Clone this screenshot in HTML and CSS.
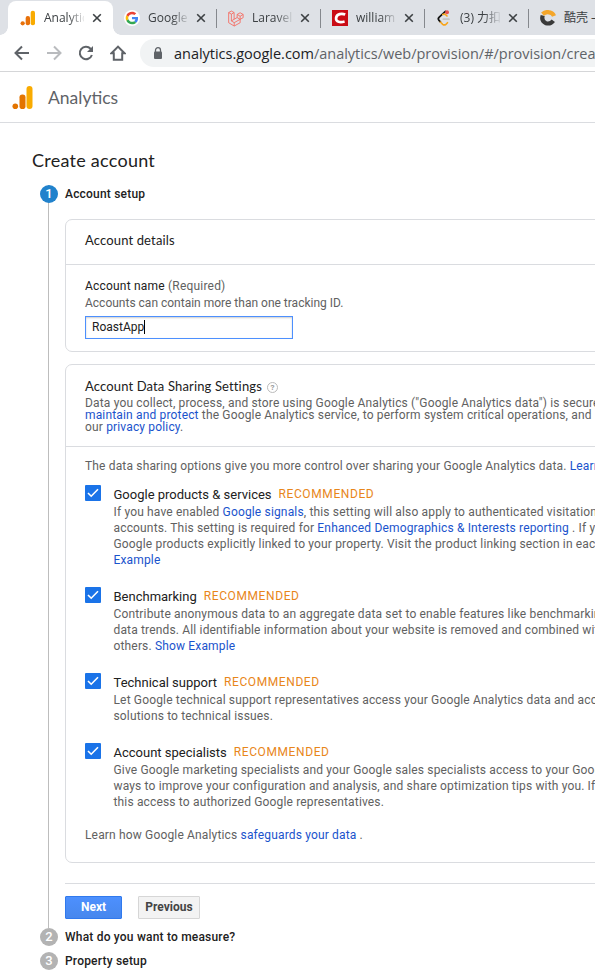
FILE: index.html
```
<!DOCTYPE html>
<html lang="en">
<head>
    <meta charset="UTF-8">
    <meta name="viewport" content="width=device-width, initial-scale=1.0">
    <title>Analytics</title>
    <link rel="stylesheet" href="styles.css">
</head>
<body>

<div class="tabs">
    <div class="tab active">
        <svg class="favicon" width="16" height="16" viewBox="0 0 24 24"><rect x="16" y="1" width="6.5" height="22" rx="3" fill="#f9ab00"/><rect x="8.5" y="9" width="6.5" height="14" rx="3" fill="#e8710a"/><circle cx="4" cy="20" r="3.2" fill="#e8710a"/></svg>
        <span class="tab-title">Analytics</span>
        <svg class="close" width="10" height="10" viewBox="0 0 10 10"><path d="M1.2 1.2l7.6 7.6M8.8 1.2L1.2 8.8"/></svg>
    </div>
    <div class="tab">
        <svg class="favicon round" width="16" height="16" viewBox="0 0 48 48"><circle cx="24" cy="24" r="24" fill="#fff"/><g transform="translate(5 5) scale(.79)"><path fill="#ea4335" d="M24 9.5c3.54 0 6.71 1.22 9.21 3.6l6.85-6.85C35.9 2.38 30.47 0 24 0 14.62 0 6.51 5.38 2.56 13.22l7.98 6.19C12.43 13.72 17.74 9.5 24 9.5z"/><path fill="#4285f4" d="M46.98 24.55c0-1.57-.15-3.09-.38-4.55H24v9.02h12.94c-.58 2.96-2.26 5.48-4.78 7.18l7.73 6c4.51-4.18 7.09-10.36 7.09-17.65z"/><path fill="#fbbc05" d="M10.53 28.59c-.48-1.45-.76-2.99-.76-4.59s.27-3.14.76-4.59l-7.98-6.19C.92 16.46 0 20.12 0 24s.92 7.54 2.56 10.78l7.97-6.19z"/><path fill="#34a853" d="M24 48c6.48 0 11.93-2.13 15.89-5.81l-7.73-6c-2.15 1.45-4.92 2.3-8.16 2.3-6.26 0-11.57-4.22-13.47-9.91l-7.98 6.19C6.51 42.62 14.62 48 24 48z"/></g></svg>
        <span class="tab-title">Google</span>
        <svg class="close" width="10" height="10" viewBox="0 0 10 10"><path d="M1.2 1.2l7.6 7.6M8.8 1.2L1.2 8.8"/></svg>
    </div>
    <div class="tab divided">
        <svg class="favicon" width="17" height="17" viewBox="0 0 17 17" fill="none" stroke="#f5675c" stroke-width=".9" stroke-linejoin="round"><path d="M.7 2.2L3.6.6l2.9 1.6v7.1l3.2-1.8V4.2l3.2-1.8 3.2 1.8v3.4l-3.2 1.8V13l-6.3 3.5L.7 13zM.7 2.2l2.9 1.7 2.9-1.7M3.6 3.9v7.2l3 1.8v3.6M3.6 11.1l2.9-1.8M9.7 4.2l3.2 1.9 3.2-1.9M12.9 6.1v3.3L9.7 7.5M6.6 12.9l6.3-3.5"/></svg>
        <span class="tab-title">Laravel</span>
        <svg class="close" width="10" height="10" viewBox="0 0 10 10"><path d="M1.2 1.2l7.6 7.6M8.8 1.2L1.2 8.8"/></svg>
    </div>
    <div class="tab divided">
        <svg class="favicon" width="16" height="16" viewBox="0 0 16 16"><rect width="16" height="16" fill="#ca0c16"/><path d="M13.2 4.5C10 3.2 4.6 3.6 4.1 8c-.5 4.3 4.3 4.6 8.5 3.5" fill="none" stroke="#fff" stroke-width="2.7"/></svg>
        <span class="tab-title">william</span>
        <svg class="close" width="10" height="10" viewBox="0 0 10 10"><path d="M1.2 1.2l7.6 7.6M8.8 1.2L1.2 8.8"/></svg>
    </div>
    <div class="tab divided">
        <svg class="favicon" width="16" height="16" viewBox="0 0 16 16" fill="none" stroke-linecap="round"><path d="M9.4 1.4L3 7.3q-1.4 1.5 0 3l1.4 1.5" stroke="#111" stroke-width="1.7"/><path d="M4.4 12l2.3 2.3q1.6 1.3 3.2 0l1.6-1.6M6.8 4.5q1.8-1 3.2.5l1 1" stroke="#f8a51b" stroke-width="1.6"/><path d="M7.4 9.2h5.5" stroke="#c4c4c4" stroke-width="1.8"/><circle cx="11" cy="2.2" r="2" fill="#e5504d"/></svg>
        <span class="tab-title">(3) 力扣</span>
        <svg class="close" width="10" height="10" viewBox="0 0 10 10"><path d="M1.2 1.2l7.6 7.6M8.8 1.2L1.2 8.8"/></svg>
    </div>
    <div class="tab divided">
        <svg class="favicon" width="16" height="16" viewBox="0 0 16 16" fill="none" stroke-width="4.2"><path d="M2.7 5.5Q1 11.2 6 13.2q4.5 1.2 7.3-2.5" stroke="#3a3a3a"/><path d="M2.5 4.2Q6 1.2 9.5 2.4 13 3.2 14 6" stroke="#f4a62a"/></svg>
        <span class="tab-title wide">酷壳 – C</span>
    </div>
</div>

<div class="toolbar">
    <svg class="nav" width="16" height="16" viewBox="0 0 16 16"><path d="M15 8H2M8 1.5L1.5 8 8 14.5"/></svg>
    <svg class="nav disabled" width="16" height="16" viewBox="0 0 16 16"><path d="M1 8h13M8 1.5L14.5 8 8 14.5"/></svg>
    <svg class="nav" width="16" height="16" viewBox="0 0 16 16"><path d="M13.9 10A6.2 6.2 0 1 1 12.6 3.8L14 5.2"/><path class="solid" d="M15 1v6H9z"/></svg>
    <svg class="nav" width="16" height="16" viewBox="0 0 16 16"><path d="M8 1.6L1.5 8.2h2.3v6.6h8.4V8.2h2.3z"/></svg>
    <div class="address">
        <svg width="10" height="13" viewBox="0 0 10 13"><rect x="1" y="4.5" width="8" height="7.5" rx="1" fill="#5f6368"/><path d="M2.5 5V3.2a2.5 2.5 0 0 1 5 0V5" fill="none" stroke="#5f6368" stroke-width="1.3"/></svg>
        <span class="url"><b>analytics.google.com</b>/analytics/web/provision/#/provision/create</span>
    </div>
</div>

<header class="header">
    <svg width="21" height="24" viewBox="0 0 21 24"><rect x="14.5" y="0" width="6" height="23" rx="3" fill="#f9ab00"/><rect x="7.5" y="8.5" width="6" height="14.5" rx="2.8" fill="#e37400"/><circle cx="3.3" cy="20.2" r="2.8" fill="#e37400"/></svg>
    <span class="product">Analytics</span>
</header>

<main class="page">
    <h1>Create account</h1>

    <section class="step open">
        <div class="rail"><span class="number current">1</span></div>
        <div class="step-body">
            <h2>Account setup</h2>

            <div class="card">
                <div class="card-head"><h3>Account details</h3></div>
                <div class="account">
                    <label for="name">Account name <span>(Required)</span></label>
                    <p class="hint">Accounts can contain more than one tracking ID.</p>
                    <div class="field" id="name">RoastApp<i class="caret"></i></div>
                </div>
            </div>

            <div class="card sharing">
                <div class="sharing-head">
                    <h3>Account Data Sharing Settings <span class="help">?</span></h3>
                    <p>Data you collect, process, and store using Google Analytics ("Google Analytics data") is secure<br><a>maintain and protect</a> the Google Analytics service, to perform system critical operations, and<br>our <a>privacy policy</a>.</p>
                </div>
                <div class="sharing-body">
                    <p class="intro">The data sharing options give you more control over sharing your Google Analytics data. <a>Learn more</a></p>

                    <div class="option">
                        <svg class="check" width="16" height="16" viewBox="0 0 16 16"><rect width="16" height="16" rx="1"/><path d="M3 8l3.2 3.2L13 4.2"/></svg>
                        <div>
                            <h4>Google products &amp; services <em>RECOMMENDED</em></h4>
                            <p>If you have enabled <a>Google signals</a>, this setting will also apply to authenticated visitation<br>accounts. This setting is required for <a>Enhanced Demographics &amp; Interests reporting</a> . If you<br>Google products explicitly linked to your property. Visit the product linking section in each<br><a>Example</a></p>
                        </div>
                    </div>
                    <div class="option">
                        <svg class="check" width="16" height="16" viewBox="0 0 16 16"><rect width="16" height="16" rx="1"/><path d="M3 8l3.2 3.2L13 4.2"/></svg>
                        <div>
                            <h4>Benchmarking <em>RECOMMENDED</em></h4>
                            <p>Contribute anonymous data to an aggregate data set to enable features like benchmarking<br>data trends. All identifiable information about your website is removed and combined with<br>others. <a>Show Example</a></p>
                        </div>
                    </div>
                    <div class="option">
                        <svg class="check" width="16" height="16" viewBox="0 0 16 16"><rect width="16" height="16" rx="1"/><path d="M3 8l3.2 3.2L13 4.2"/></svg>
                        <div>
                            <h4>Technical support <em>RECOMMENDED</em></h4>
                            <p>Let Google technical support representatives access your Google Analytics data and account<br>solutions to technical issues.</p>
                        </div>
                    </div>
                    <div class="option">
                        <svg class="check" width="16" height="16" viewBox="0 0 16 16"><rect width="16" height="16" rx="1"/><path d="M3 8l3.2 3.2L13 4.2"/></svg>
                        <div>
                            <h4>Account specialists <em>RECOMMENDED</em></h4>
                            <p>Give Google marketing specialists and your Google sales specialists access to your Google<br>ways to improve your configuration and analysis, and share optimization tips with you. If<br>this access to authorized Google representatives.</p>
                        </div>
                    </div>

                    <p class="learn">Learn how Google Analytics <a>safeguards your data</a> .</p>
                </div>
            </div>

            <div class="actions">
                <button class="primary">Next</button>
                <button>Previous</button>
            </div>
        </div>
    </section>

    <section class="step">
        <div class="rail"><span class="number">2</span></div>
        <h2>What do you want to measure?</h2>
    </section>
    <section class="step">
        <div class="rail"><span class="number">3</span></div>
        <h2>Property setup</h2>
    </section>
</main>

</body>
</html>
```
FILE: styles.css
```
* {
    box-sizing: border-box;
}
body {
    margin: 0;
    height: 970px;
    overflow: hidden;
    background: #fff;
    color: #212121;
    font-family: Roboto, "Noto Sans CJK SC", sans-serif;
    font-size: 12px;
    letter-spacing: 0.16px;
    white-space: nowrap;
}
h1, h2, h3, h4, p {
    margin: 0;
    font-weight: 400;
}
a {
    color: #1a53cc;
}

/* browser tabs */
.tabs {
    display: flex;
    height: 35px;
    padding-left: 8px;
    background: #dee1e6;
    font-family: "Open Sans", "Noto Sans CJK SC", sans-serif;
    letter-spacing: 0;
    overflow: hidden;
}
.tab {
    position: relative;
    flex: none;
    display: flex;
    align-items: center;
    width: 104px;
    height: 35px;
    padding: 1px 0 0 12px;
    color: #3c4043;
}
.tab.active {
    height: 34px;
    margin: 1px -1px 0 0;
    padding: 0 0 0 12px;
    width: 105px;
    border-radius: 8px 8px 0 0;
    background: #fff;
}
.tab.active::before, .tab.active::after {
    content: "";
    position: absolute;
    bottom: 0;
    left: -8px;
    width: 8px;
    height: 8px;
    background: radial-gradient(circle at 0 0, #dee1e6 7.5px, #fff 8px);
}
.tab.active::after {
    left: auto;
    right: -8px;
    background: radial-gradient(circle at 100% 0, #dee1e6 7.5px, #fff 8px);
}
.tab.divided::before {
    content: "";
    position: absolute;
    left: 0;
    top: 9px;
    width: 1px;
    height: 19px;
    background: #85888d;
}
.favicon {
    flex: none;
    width: 16px;
    margin-right: 8px;
}
.tab-title {
    width: 40px;
    margin-right: 8px;
    overflow: hidden;
    font-size: 12px;
    line-height: 18px;
    -webkit-mask-image: linear-gradient(to right, #000 60%, transparent 105%);
    mask-image: linear-gradient(to right, #000 60%, transparent 105%);
}
.tab-title.wide {
    width: 70px;
    -webkit-mask-image: none;
    mask-image: none;
}
.close {
    fill: none;
    stroke: #3c4043;
    stroke-width: 1.6;
}

/* address bar */
.toolbar {
    display: flex;
    align-items: center;
    gap: 16px;
    height: 37px;
    padding-left: 14px;
    border-bottom: 1px solid #d5d6d8;
}
.nav {
    flex: none;
    fill: none;
    stroke: #5f6368;
    stroke-width: 2;
}
.nav .solid {
    fill: #5f6368;
    stroke: none;
}
.nav.disabled {
    stroke: #b9bbbe;
}
.address {
    flex: none;
    display: flex;
    align-items: center;
    gap: 11px;
    width: 500px;
    height: 28px;
    margin-left: -2px;
    padding-left: 13px;
    border-radius: 14px;
    background: #f1f3f4;
}
.url {
    font-family: "Open Sans", sans-serif;
    font-size: 14.5px;
    letter-spacing: -0.02px;
    color: #5f6368;
}
.url b {
    font-weight: 400;
    color: #202124;
}

/* product header */
.header {
    display: flex;
    align-items: center;
    gap: 15px;
    height: 51px;
    padding: 1px 0 0 12px;
    border-bottom: 1px solid #dadce0;
}
.product {
    font-family: Lato, sans-serif;
    font-size: 17.5px;
    letter-spacing: 0;
    color: #5f6368;
}

.page {
    padding: 27px 0 0 32px;
}
h1 {
    font-family: Lato, sans-serif;
    font-size: 18px;
    line-height: 20px;
    letter-spacing: 0.26px;
}
.step {
    display: flex;
    height: 24px;
    padding-left: 8px;
}
.step.open {
    height: 743px;
    margin-top: 15px;
}
.rail {
    flex: none;
    width: 17px;
    margin-right: 8px;
}
.open .rail {
    background: linear-gradient(#bdbdbd, #bdbdbd) 8px 0 / 1px 100% no-repeat;
}
.number {
    display: block;
    width: 18px;
    height: 18px;
    border-radius: 50%;
    background: #b3b3b3;
    color: #fff;
    font-size: 13px;
    font-weight: 500;
    line-height: 18px;
    letter-spacing: 0;
    text-align: center;
}
.number.current {
    background: #2182cc;
}
.step-body {
    flex: none;
    width: 700px;
}
h2 {
    font-size: 12px;
    font-weight: 500;
    line-height: 18px;
    letter-spacing: 0.2px;
}

/* cards */
.card {
    height: 133px;
    margin-top: 16px;
    border: 1px solid #dadce0;
    border-radius: 7px;
}
h3 {
    font-family: Lato, sans-serif;
    font-size: 13px;
    line-height: 18px;
    letter-spacing: 0.14px;
}
.card-head {
    height: 45px;
    padding: 11px 19px;
    border-bottom: 1px solid #dadce0;
}
.account {
    padding: 13px 19px;
}
label {
    display: block;
    line-height: 16px;
    letter-spacing: 0.2px;
}
label span, p {
    color: #616161;
}
.hint {
    margin-top: 1px;
    line-height: 16px;
    letter-spacing: 0;
}
.field {
    display: flex;
    align-items: center;
    width: 208px;
    height: 23px;
    margin-top: 5px;
    padding: 0 6px 2px;
    border: 1px solid #4d90fe;
    box-shadow: inset 0 1px 2px rgba(0, 0, 0, 0.2);
    letter-spacing: 0;
}
.caret {
    width: 1px;
    height: 14px;
    background: #000;
}
.sharing {
    height: 499px;
    margin-top: 12px;
}
.sharing-head {
    height: 82px;
    padding: 11px 19px 0;
    border-bottom: 1px solid #dadce0;
}
.sharing-head h3 {
    display: flex;
    align-items: center;
    gap: 5px;
    height: 21px;
    padding-bottom: 1px;
}
.help {
    width: 11px;
    height: 11px;
    margin-top: 2px;
    border: 1px solid #bbb;
    border-radius: 50%;
    color: #999;
    font: bold 8px/9px Roboto, sans-serif;
    letter-spacing: 0;
    text-align: center;
}
.sharing-head p {
    line-height: 12px;
}
.sharing-body {
    padding: 11px 19px 0;
}
.intro {
    margin-bottom: 11px;
    line-height: 16px;
}
.option {
    display: flex;
    gap: 12.5px;
    margin-bottom: 19px;
}
.check {
    flex: none;
    fill: #1a73e8;
}
.check path {
    fill: none;
    stroke: #fff;
    stroke-width: 1.6;
}
h4 {
    display: flex;
    gap: 7px;
    height: 19px;
    font-size: 13px;
    line-height: 19px;
    letter-spacing: 0;
}
h4 em {
    color: #e8861a;
    font-size: 12px;
    line-height: 18px;
    font-style: normal;
    letter-spacing: 0.6px;
}
.option p {
    line-height: 16px;
}
.learn {
    margin-top: -2px;
    line-height: 16px;
}

/* buttons */
.actions {
    display: flex;
    gap: 16px;
    margin-top: 20px;
    padding-top: 12px;
    border-top: 1px solid #dadce0;
}
button {
    width: 62px;
    height: 23px;
    padding: 0 0 2px;
    border: 1px solid #d6d6d6;
    border-radius: 1px;
    background: #f3f3f3;
    color: #444;
    font: bold 12px Roboto, sans-serif;
}
button.primary {
    width: 57px;
    border-color: #3079ed;
    background: linear-gradient(#4d90fe, #4787ed);
    color: #fff;
}
```
